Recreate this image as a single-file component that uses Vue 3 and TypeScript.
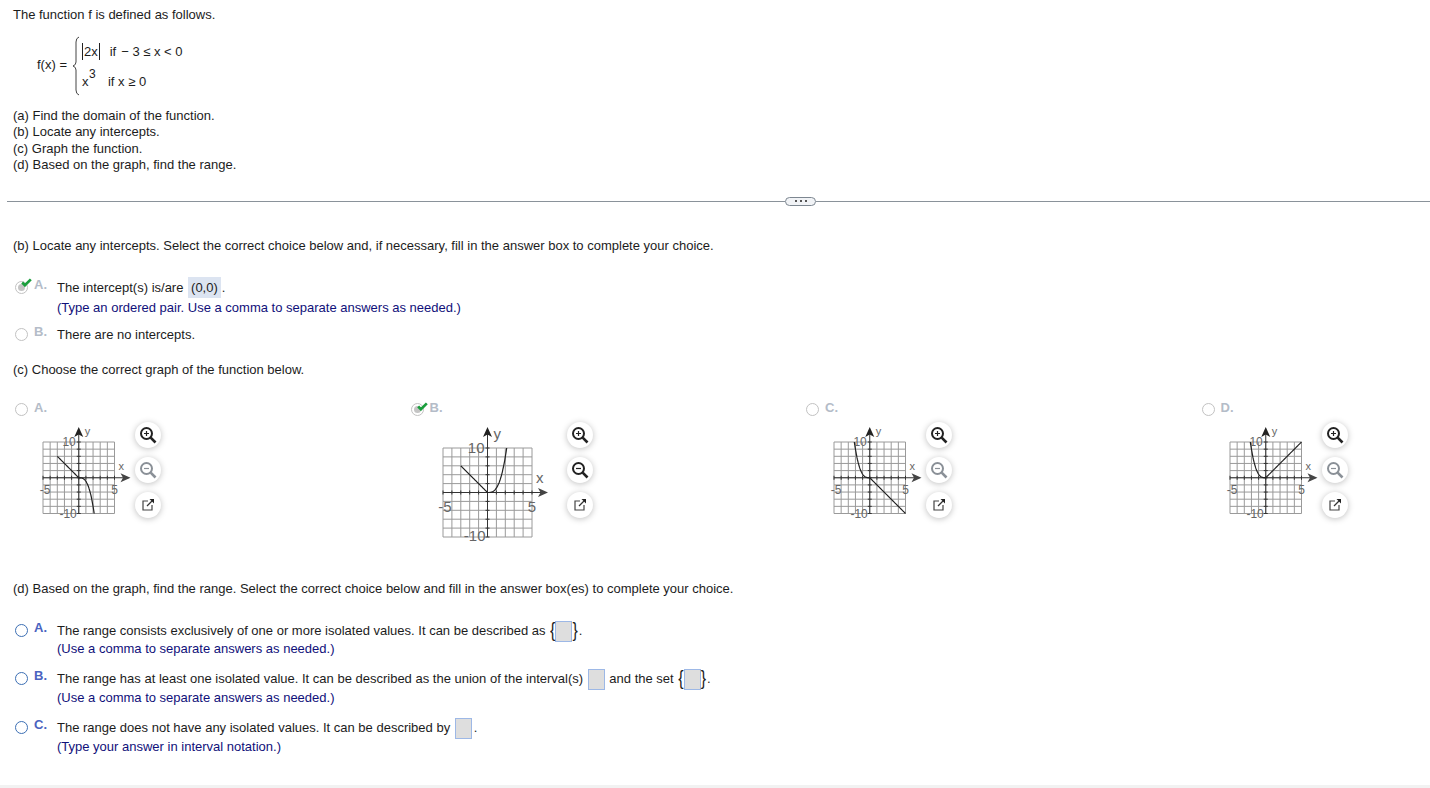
<script setup lang="ts">
type Pt = [number, number];

interface Graph {
  letter: string;
  selected: boolean;
  large: boolean;
  zoomOutActive: boolean;
  left: (x: number) => number;
  leftFrom: number;
  right: (x: number) => number;
  rightTo: number;
}

const cube = (x: number) => x * x * x;

const graphs: Graph[] = [
  { letter: "A", selected: false, large: false, zoomOutActive: false, left: (x) => -2 * x, leftFrom: -3, right: (x) => -cube(x), rightTo: 2.154 },
  { letter: "B", selected: true, large: true, zoomOutActive: true, left: (x) => -2 * x, leftFrom: -3, right: (x) => cube(x), rightTo: 2.154 },
  { letter: "C", selected: false, large: false, zoomOutActive: false, left: (x) => -cube(x), leftFrom: -2.154, right: (x) => -2 * x, rightTo: 5 },
  { letter: "D", selected: false, large: false, zoomOutActive: false, left: (x) => -cube(x), leftFrom: -2.154, right: (x) => 2 * x, rightTo: 5 },
];

// grid offset inside the svg
const ox = 11;
const oyOf = (g: Graph) => (g.large ? 23 : 17);
const cellOf = (g: Graph) => (g.large ? 8.9 : 7.15);
const px = (g: Graph, x: number) => ox + (x + 5) * cellOf(g);
const py = (g: Graph, y: number) => oyOf(g) + (10 - y) * (cellOf(g) / 2);

const steps = [0, 1, 2, 3, 4, 5, 6, 7, 8, 9, 10];

const curve = (g: Graph) => {
  const pts: Pt[] = [];
  const n = 40;
  for (let i = 0; i <= n; i++) {
    const x = g.leftFrom - (g.leftFrom * i) / n;
    pts.push([px(g, x), py(g, g.left(x))]);
  }
  for (let i = 1; i <= n; i++) {
    const x = (g.rightTo * i) / n;
    pts.push([px(g, x), py(g, g.right(x))]);
  }
  return pts.map((p) => p[0].toFixed(1) + "," + p[1].toFixed(1)).join(" ");
};
</script>

<template>
  <div class="page">
    <p class="line">The function f is defined as follows.</p>

    <div class="formula">
      <span class="fname">f(x) =</span>
      <svg class="brace" width="10" height="60" viewBox="0 0 10 60">
        <path d="M8 1 Q5 2 5 6 L5 26 Q5 29 2 30 Q5 31 5 34 L5 54 Q5 58 8 59" fill="none" stroke="#444" stroke-width="1" />
      </svg>
      <div class="cases">
        <div class="case-top"><span class="abs">2x</span><span class="cond">if</span><span class="cond-math">− 3 ≤ x &lt; 0</span></div>
        <div class="case-bottom"><span class="pow">x<sup>3</sup></span><span class="cond">if x ≥ 0</span></div>
      </div>
    </div>

    <div class="parts">
      <div>(a) Find the domain of the function.</div>
      <div>(b) Locate any intercepts.</div>
      <div>(c) Graph the function.</div>
      <div>(d) Based on the graph, find the range.</div>
    </div>

    <div class="divider">
      <span class="rule rule-left"></span>
      <button class="more"><i></i><i></i><i></i></button>
      <span class="rule"></span>
    </div>

    <p class="line prompt-b">(b) Locate any intercepts. Select the correct choice below and, if necessary, fill in the answer box to complete your choice.</p>

    <div class="choice first-b">
      <span class="radio done"><i></i>
        <svg class="tick" width="11" height="9" viewBox="0 0 14 11"><path d="M1.5 5.5 L5 9 L12.5 1.5" fill="none" stroke="#1a9e3c" stroke-width="3.4" /></svg>
      </span>
      <span class="letter muted">A.</span>
      <div class="body">
        <div>The intercept(s) is/are <span class="answer">(0,0)</span><span class="dot">.</span></div>
        <div class="hint gap">(Type an ordered pair. Use a comma to separate answers as needed.)</div>
      </div>
    </div>
    <div class="choice second-b">
      <span class="radio"></span>
      <span class="letter muted">B.</span>
      <div class="body">There are no intercepts.</div>
    </div>

    <p class="line prompt-c">(c) Choose the correct graph of the function below.</p>

    <div class="graphs">
      <div v-for="g in graphs" :key="g.letter" class="graph-col">
        <div class="graph-head">
          <span class="radio" :class="{ done: g.selected }">
            <i v-if="g.selected"></i>
            <svg v-if="g.selected" class="tick" width="11" height="9" viewBox="0 0 14 11"><path d="M1.5 5.5 L5 9 L12.5 1.5" fill="none" stroke="#1a9e3c" stroke-width="3.4" /></svg>
          </span>
          <span class="letter muted">{{ g.letter }}.</span>
        </div>
        <div class="graph-row" :class="{ big: g.large }">
          <svg class="plot" :width="g.large ? 130 : 103" :height="g.large ? 124 : 102">
            <line v-for="i in steps" :key="'v' + i" :x1="ox + i * cellOf(g)" :x2="ox + i * cellOf(g)" :y1="oyOf(g)" :y2="oyOf(g) + 10 * cellOf(g)" class="grid" />
            <line v-for="i in steps" :key="'h' + i" :x1="ox" :x2="ox + 10 * cellOf(g)" :y1="oyOf(g) + i * cellOf(g)" :y2="oyOf(g) + i * cellOf(g)" class="grid" />
            <line :x1="ox" :x2="ox + 10 * cellOf(g) + 14" :y1="oyOf(g) + 5 * cellOf(g)" :y2="oyOf(g) + 5 * cellOf(g)" class="axis" />
            <line :x1="ox + 5 * cellOf(g)" :x2="ox + 5 * cellOf(g)" :y1="5" :y2="oyOf(g) + 10 * cellOf(g)" class="axis" />
            <line v-for="i in steps" :key="'tx' + i" :x1="ox + i * cellOf(g)" :x2="ox + i * cellOf(g)" :y1="oyOf(g) + 5 * cellOf(g) - 2" :y2="oyOf(g) + 5 * cellOf(g) + 2" class="axis" />
            <line v-for="i in steps" :key="'ty' + i" :x1="ox + 5 * cellOf(g) - 2" :x2="ox + 5 * cellOf(g) + 2" :y1="oyOf(g) + i * cellOf(g)" :y2="oyOf(g) + i * cellOf(g)" class="axis" />
            <path :d="`M${ox + 5 * cellOf(g)} 2 l-4.5 10 l4.5 -2.5 l4.5 2.5 z`" fill="#222" />
            <path :d="`M${ox + 10 * cellOf(g) + 16} ${oyOf(g) + 5 * cellOf(g)} l-10 -4.5 l2.5 4.5 l-2.5 4.5 z`" fill="#444" />
            <polyline :points="curve(g)" fill="none" stroke="#222" stroke-width="1.2" />
            <g class="labels" :class="{ bigtext: g.large }">
              <text class="var" :x="ox + 5 * cellOf(g) + 6" :y="g.large ? 14 : 10">y</text>
              <text class="var" :x="ox + 10 * cellOf(g) + 4" :y="oyOf(g) + 5 * cellOf(g) - (g.large ? 10 : 8)">x</text>
              <text :x="ox + 5 * cellOf(g) - 3" :y="oyOf(g) + (g.large ? 5 : 4)" text-anchor="end">10</text>
              <text :x="ox + 5 * cellOf(g) - 2" :y="oyOf(g) + 10 * cellOf(g) + 4" text-anchor="end">-10</text>
              <text :x="ox + 2" :y="oyOf(g) + 5 * cellOf(g) + (g.large ? 19 : 16)" text-anchor="middle">-5</text>
              <text :x="ox + 10 * cellOf(g)" :y="oyOf(g) + 5 * cellOf(g) + (g.large ? 19 : 16)" text-anchor="middle">5</text>
            </g>
          </svg>
          <div class="tools">
            <span class="tool">
              <svg width="20" height="20" viewBox="0 0 20 20"><circle cx="8.5" cy="8.5" r="5.5" fill="none" stroke="#222" stroke-width="2" /><path d="M12.7 12.7 L17.5 17.5" stroke="#222" stroke-width="2.6" /><path d="M6 8.5h5M8.5 6v5" stroke="#222" stroke-width="1.2" /></svg>
            </span>
            <span class="tool">
              <svg width="20" height="20" viewBox="0 0 20 20"><circle cx="8.5" cy="8.5" r="5.5" fill="none" :stroke="g.zoomOutActive ? '#222' : '#8a9097'" stroke-width="2" /><path d="M12.7 12.7 L17.5 17.5" :stroke="g.zoomOutActive ? '#222' : '#8a9097'" stroke-width="2.6" /><path d="M6 8.5h5" :stroke="g.zoomOutActive ? '#222' : '#8a9097'" stroke-width="1.2" /></svg>
            </span>
            <span class="tool">
              <svg width="20" height="20" viewBox="0 0 20 20"><path d="M10 6 H5 V15 H14 V10" fill="none" stroke="#444" stroke-width="1.2" /><path d="M9 11 L14 6" stroke="#333" stroke-width="1.2" /><path d="M11.5 4 H16 V8.5 z" fill="#222" /></svg>
            </span>
          </div>
        </div>
      </div>
    </div>

    <p class="line prompt-d">(d) Based on the graph, find the range. Select the correct choice below and fill in the answer box(es) to complete your choice.</p>

    <div class="choice first-d">
      <span class="radio active"></span>
      <span class="letter live">A.</span>
      <div class="body">
        <div>The range consists exclusively of one or more isolated values. It can be described as <span class="set"><span class="brk">{</span><span class="box"></span><span class="brk">}</span></span><span class="dot">.</span></div>
        <div class="hint">(Use a comma to separate answers as needed.)</div>
      </div>
    </div>
    <div class="choice next-d">
      <span class="radio active"></span>
      <span class="letter live">B.</span>
      <div class="body">
        <div>The range has at least one isolated value. It can be described as the union of the interval(s) <span class="box"></span> and the set <span class="set"><span class="brk">{</span><span class="box"></span><span class="brk">}</span></span><span class="dot">.</span></div>
        <div class="hint gap">(Use a comma to separate answers as needed.)</div>
      </div>
    </div>
    <div class="choice next-d">
      <span class="radio active"></span>
      <span class="letter live">C.</span>
      <div class="body">
        <div>The range does not have any isolated values. It can be described by <span class="box"></span><span class="dot">.</span></div>
        <div class="hint gap">(Type your answer in interval notation.)</div>
      </div>
    </div>

    <div class="bottom"></div>
  </div>
</template>

<style>
html,
body {
  margin: 0;
  background: #fff;
}
</style>

<style scoped>
.page {
  box-sizing: border-box;
  width: 1430px;
  height: 788px;
  overflow: hidden;
  padding: 7px 0 0 13px;
  font-family: "Liberation Sans", Arial, sans-serif;
  font-size: 13px;
  color: #1c1c1c;
  position: relative;
}
.line {
  margin: 0;
  line-height: 16px;
}
.formula {
  display: flex;
  align-items: center;
  height: 60px;
  margin: 13px 0 0 24px;
}
.fname {
  margin: -3px 3px 0 0;
}
.brace {
  margin-left: 1px;
}
.cases {
  margin-left: 1px;
}
.case-top {
  height: 30px;
  display: flex;
  align-items: center;
}
.case-bottom {
  height: 30px;
  display: flex;
  align-items: center;
}
.abs {
  border-left: 1px solid #222;
  border-right: 1px solid #222;
  padding: 0 1px;
  line-height: 17px;
}
.cond {
  margin-left: 10px;
}
.cond-math {
  margin-left: 5px;
}
.pow {
  position: relative;
  width: 16px;
}
.pow sup {
  position: absolute;
  left: 7px;
  top: -7px;
  font-size: 12px;
}
.parts {
  margin-top: 12px;
  line-height: 16.3px;
}
.divider {
  display: flex;
  align-items: center;
  height: 10px;
  margin: 23px 0 0 -6px;
}
.rule {
  flex: 1;
  height: 1px;
  background: #8a929a;
}
.rule-left {
  flex: 0 0 778px;
}
.more {
  box-sizing: border-box;
  width: 31px;
  height: 9px;
  padding: 0;
  border: 1px solid #7d8791;
  border-radius: 5px;
  background: #f1f3f6;
  display: flex;
  align-items: center;
  justify-content: center;
  gap: 3px;
}
.more i {
  width: 2px;
  height: 2px;
  background: #555;
}
.prompt-b {
  margin-top: 32px;
}
.choice {
  display: flex;
  align-items: flex-start;
  line-height: 18px;
}
.first-b {
  margin-top: 25px;
}
.second-b {
  margin-top: 9px;
}
.radio {
  box-sizing: border-box;
  flex: none;
  width: 13px;
  height: 13px;
  margin: 2px 0 0 2px;
  border: 1px solid #c2c2c2;
  border-radius: 50%;
  position: relative;
  display: block;
}
.radio.active {
  border: 1.5px solid #3c6fb4;
}
.radio.done i {
  position: absolute;
  left: 2px;
  top: 2px;
  width: 7px;
  height: 7px;
  border-radius: 50%;
  background: #c4c4c4;
}
.tick {
  position: absolute;
  left: 5px;
  top: -4px;
}
.letter {
  flex: none;
  width: 29px;
  padding-left: 6px;
  box-sizing: border-box;
  font-weight: bold;
  margin-top: -3px;
}
.muted {
  color: #b4bcc8;
}
.live {
  color: #4a63c0;
}
.body {
  flex: 1;
}
.answer {
  display: inline-block;
  padding: 0 3px;
  margin-left: 1px;
  line-height: 21px;
  background: #dce4f1;
  margin-top: -2px;
}
.dot {
  margin-left: 1px;
}
.hint {
  color: #10107a;
}
.hint.gap {
  margin-top: 1px;
}
.prompt-c {
  margin-top: 18px;
}
.graphs {
  display: grid;
  grid-template-columns: repeat(3, 395.5px) 1fr;
  height: 173px;
  margin: 22px 0 0 2px;
}
.graph-head {
  display: flex;
  height: 18px;
}
.graph-head .radio {
  margin: 3px 0 0;
}
.graph-head .tick {
  top: -2px;
}
.graph-head .letter {
  width: auto;
  margin-top: 0;
}
.graph-row {
  display: flex;
  margin: 7px 0 0 17px;
}
.plot {
  flex: none;
}
.big .plot {
  margin-right: 5px;
}
.big {
  margin-left: 21px;
}
.grid {
  stroke: #9a9a9a;
  stroke-width: 1;
}
.axis {
  stroke: #333;
  stroke-width: 1;
}
.labels text {
  font-size: 12px;
  fill: #666;
  font-family: "Liberation Sans", Arial, sans-serif;
}
.labels text.var {
  font-size: 11px;
}
.labels.bigtext text {
  font-size: 15px;
}
.tools {
  display: flex;
  flex-direction: column;
  gap: 9px;
  margin-top: -3px;
}
.tool {
  width: 26px;
  height: 26px;
  border-radius: 50%;
  background: #fff;
  box-shadow: 0 1px 6px rgba(0, 0, 0, 0.25);
  display: flex;
  align-items: center;
  justify-content: center;
}
.prompt-d {
  margin-top: 8px;
}
.first-d {
  margin-top: 25px;
}
.next-d {
  margin-top: 12px;
}
.box {
  display: inline-block;
  box-sizing: border-box;
  width: 17px;
  height: 21px;
  margin: -3px 1px;
  vertical-align: middle;
  background: #dedede;
  border: 1px solid #9db8e6;
}
.set {
  margin-left: 1px;
}
.set .box {
  margin: -3px 0;
}
.brk {
  display: inline-block;
  font-size: 16px;
  line-height: 18px;
  vertical-align: -1px;
  transform: scaleY(1.3);
}
.bottom {
  position: absolute;
  left: 0;
  right: 0;
  top: 785px;
  height: 3px;
  background: #f2f2f2;
}
</style>
